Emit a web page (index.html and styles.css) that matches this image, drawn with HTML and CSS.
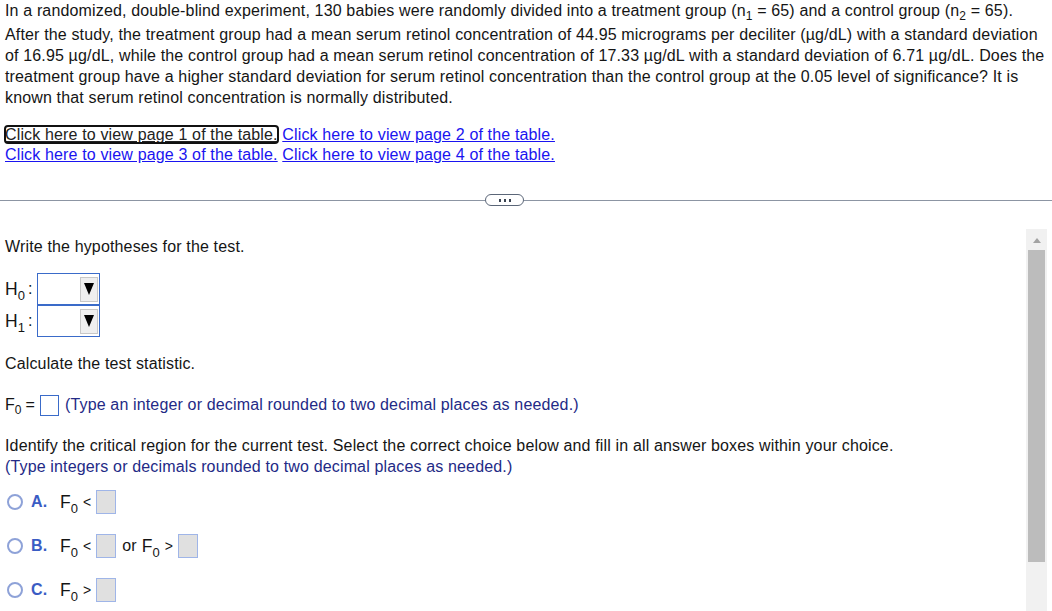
FILE: index.html
```html
<!DOCTYPE html>
<html lang="en">
<head>
    <meta charset="UTF-8">
    <title>Two-sample F test</title>
    <link rel="stylesheet" href="styles.css">
</head>
<body>
    <div class="question-top">
        <p class="intro">In a randomized, double-blind experiment, 130 babies were randomly divided into a treatment group (n<sub>1</sub> = 65) and a control group (n<sub>2</sub> = 65).</p>
        <p class="body-text">After the study, the treatment group had a mean serum retinol concentration of 44.95 micrograms per deciliter (µg/dL) with a standard deviation of 16.95 µg/dL, while the control group had a mean serum retinol concentration of 17.33 µg/dL with a standard deviation of 6.71 µg/dL. Does the treatment group have a higher standard deviation for serum retinol concentration than the control group at the 0.05 level of significance? It is known that serum retinol concentration is normally distributed.</p>
        <div class="links">
            <a href="#" class="focused">Click here to view page 1 of the table.</a> <a href="#">Click here to view page 2 of the table.</a><br>
            <a href="#">Click here to view page 3 of the table.</a> <a href="#">Click here to view page 4 of the table.</a>
        </div>
    </div>

    <div class="divider">
        <span class="line left"></span>
        <button class="more" type="button"><i></i><i></i><i></i></button>
        <span class="line right"></span>
    </div>

    <div class="answer-pane">
        <div class="answer-content">
            <p class="step">Write the hypotheses for the test.</p>

            <div class="hypo">
                <div class="hypo-row">
                    <span class="math">H<sub>0</sub></span><span class="colon">:</span>
                    <div class="select"><span class="select-btn"><span class="tri"></span></span></div>
                </div>
                <div class="hypo-row">
                    <span class="math">H<sub>1</sub></span><span class="colon">:</span>
                    <div class="select"><span class="select-btn"><span class="tri"></span></span></div>
                </div>
            </div>

            <p class="step calc">Calculate the test statistic.</p>

            <div class="stat-row">
                <span class="math small">F<sub>0</sub></span> =
                <span class="input-box"></span>
                <span class="hint">(Type an integer or decimal rounded to two decimal places as needed.)</span>
            </div>

            <p class="step critical">Identify the critical region for the current test. Select the correct choice below and fill in all answer boxes within your choice.<br><span class="hint">(Type integers or decimals rounded to two decimal places as needed.)</span></p>

            <div class="choices">
                <div class="choice">
                    <span class="radio"></span><span class="letter">A.</span>
                    <span class="math">F<sub>0</sub></span><span class="op">&lt;</span><span class="blank"></span>
                </div>
                <div class="choice">
                    <span class="radio"></span><span class="letter">B.</span>
                    <span class="math">F<sub>0</sub></span><span class="op">&lt;</span><span class="blank"></span>
                    <span class="or">or</span>
                    <span class="math">F<sub>0</sub></span><span class="op">&gt;</span><span class="blank"></span>
                </div>
                <div class="choice">
                    <span class="radio"></span><span class="letter">C.</span>
                    <span class="math">F<sub>0</sub></span><span class="op">&gt;</span><span class="blank"></span>
                </div>
            </div>
        </div>

        <div class="scrollbar">
            <span class="arrow-up"></span>
            <span class="thumb"></span>
        </div>
    </div>
</body>
</html>
```

FILE: styles.css
```css
html, body {
    height: 100%;
}
body {
    margin: 0;
    font-family: "Liberation Sans", Arial, sans-serif;
    font-size: 16px;
    letter-spacing: 0.15px;
    color: #151515;
    background: white;
    overflow: hidden;
    display: flex;
    flex-direction: column;
}
p {
    margin: 0;
}
sub {
    font-size: 12px;
    line-height: 0;
    vertical-align: -4px;
}

/* question text */
.question-top {
    height: 190px;
    padding-left: 5px;
    flex-shrink: 0;
}
.intro {
    width: 1040px;
    line-height: 21px;
}
.body-text {
    width: 1040px;
    margin-top: 3px;
    line-height: 21px;
}
.links {
    margin-top: 17px;
    line-height: 20px;
}
.links a {
    color: #1a14f0;
    text-decoration: underline;
}
.links a.focused {
    color: #222;
    outline: 2px solid #111;
    outline-offset: -1px;
    border-radius: 3px;
}

/* splitter */
.divider {
    height: 20px;
    display: flex;
    align-items: center;
    flex-shrink: 0;
}
.divider .line {
    height: 1px;
    background: #8c95a3;
}
.divider .left {
    width: 485px;
}
.divider .right {
    flex: 1;
}
.more {
    width: 39px;
    height: 12px;
    padding: 0;
    border: 1.5px solid #5b6678;
    border-radius: 6px;
    background: white;
    display: flex;
    align-items: center;
    justify-content: center;
    gap: 3px;
}
.more i {
    width: 2px;
    height: 3px;
    background: #3b4452;
}

/* answer area */
.answer-pane {
    flex: 1;
    margin-top: 19px;
    display: flex;
    min-height: 0;
}
.answer-content {
    flex: 1;
    padding: 8px 0 0 5px;
    overflow: hidden;
}
.step {
    line-height: 20px;
}
.hint {
    color: #232a86;
}

.hypo {
    margin-top: 16px;
}
.hypo-row {
    display: flex;
    align-items: center;
}
.math {
    font-size: 17.5px;
    letter-spacing: 0;
}
.math sub {
    font-size: 13px;
    vertical-align: -5px;
}
.math.small {
    font-size: 16px;
}
.math.small sub {
    font-size: 12px;
    vertical-align: -4px;
}
.colon {
    margin-left: 3px;
    width: 9px;
}
.select {
    width: 61px;
    height: 30px;
    border: 1px solid #3a6bc9;
    display: flex;
    justify-content: flex-end;
    align-items: center;
}
.select-btn {
    width: 16px;
    height: 23px;
    margin-right: 1px;
    background: #efefef;
    border: 1px solid #c8c8c8;
    display: flex;
    align-items: center;
    justify-content: center;
}
.tri {
    width: 0;
    height: 0;
    border-left: 5.5px solid transparent;
    border-right: 5.5px solid transparent;
    border-top: 12px solid #000;
}

.calc {
    margin-top: 17px;
}
.stat-row {
    margin-top: 19px;
    height: 24px;
    display: flex;
    align-items: center;
    gap: 4px;
}
.input-box {
    width: 17px;
    height: 19px;
    border: 1px solid #3a6bc9;
    margin: 0 2px 0 1px;
}

.critical {
    margin-top: 18px;
    line-height: 21px;
}

.choices {
    margin-top: 13px;
    display: flex;
    flex-direction: column;
    gap: 20px;
}
.choice {
    height: 24px;
    display: flex;
    align-items: center;
}
.radio {
    width: 12px;
    height: 12px;
    border: 2px solid #8ea2d8;
    border-radius: 50%;
    margin-left: 2px;
}
.letter {
    margin-left: 8px;
    width: 29px;
    font-weight: bold;
    color: #3a5cc4;
}
.op {
    margin-left: 5px;
    font-size: 14px;
}
.blank {
    width: 18px;
    height: 22px;
    margin-left: 5px;
    background: #e0e0e0;
    border: 1px solid #9fb5e8;
}
.or {
    margin: 0 5px 0 6px;
}

/* scrollbar */
.scrollbar {
    width: 21px;
    margin-right: 5px;
    background: #f1f1f1;
    display: flex;
    flex-direction: column;
    align-items: center;
    flex-shrink: 0;
}
.arrow-up {
    margin-top: 9px;
    width: 0;
    height: 0;
    border-left: 4.5px solid transparent;
    border-right: 4.5px solid transparent;
    border-bottom: 5px solid #a3a3a3;
}
.thumb {
    margin-top: 7px;
    width: 17px;
    height: 312px;
    background: #bcbcbc;
}
```
